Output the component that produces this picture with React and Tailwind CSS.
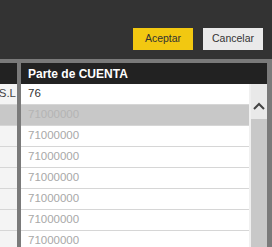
import React from 'react';

const rows = ['76', '71000000', '71000000', '71000000', '71000000', '71000000', '71000000', '71000000'];

export default function App() {
  return (
    <div className="flex h-[247px] w-[272px] flex-col overflow-hidden bg-[#333333] font-['Liberation_Sans',sans-serif]">
      <div className="flex h-[59px] shrink-0 items-end justify-end gap-[10px] pb-[9px] pr-[9px]">
        <button className="flex h-[22px] w-[60px] items-center justify-center bg-[#f2c811] text-[10.5px] text-[#333]">
          Aceptar
        </button>
        <button className="flex h-[22px] w-[60px] items-center justify-center bg-[#eaeaea] text-[10.5px] text-[#333]">
          Cancelar
        </button>
      </div>

      <div className="flex flex-1 gap-[4px] overflow-hidden bg-[#7a7a7a] pr-[5px] pt-[4px]">
        {/* left column, mostly cut off */}
        <div className="flex w-[17px] shrink-0 flex-col overflow-hidden">
          <div className="h-[21px] shrink-0 bg-[#222]" />
          {rows.map((r, i) => (
            <div
              key={i}
              className={`flex h-[21px] shrink-0 items-center justify-end border-b border-[#d6d6d6] pr-[1px] text-[11.5px] text-[#444] ${i === 1 ? 'bg-[#c8c8c8]' : 'bg-[#f4f4f4]'}`}
            >
              {i === 0 ? 'S.L' : ''}
            </div>
          ))}
        </div>

        {/* right column */}
        <div className="flex flex-1 flex-col overflow-hidden">
          <div className="flex h-[21px] shrink-0 items-center bg-[#222] pl-[7px] text-[12px] font-bold text-white">
            Parte de CUENTA
          </div>
          <div className="flex flex-1 overflow-hidden">
            <div className="flex flex-1 flex-col">
              {rows.map((r, i) => (
                <div
                  key={i}
                  className={`flex h-[21px] shrink-0 items-center border-b border-[#d6d6d6] pl-[7px] text-[11.5px] ${
                    i === 0 ? 'bg-white text-[#333]' : i === 1 ? 'bg-[#c8c8c8] text-[#b4b4b4]' : 'bg-white text-[#a8a8a8]'
                  }`}
                >
                  {r}
                </div>
              ))}
            </div>
            <div className="flex w-[18px] shrink-0 flex-col border-l-2 border-[#f0f0f0]">
              <div className="flex h-[35px] shrink-0 items-end justify-center bg-[#e9e9e9] pb-[9px]">
                <svg width="12" height="8" viewBox="0 0 12 8">
                  <path d="M1 7 L6 2 L11 7" fill="none" stroke="#444" strokeWidth="2" />
                </svg>
              </div>
              <div className="flex-1 bg-[#c8c8c8]" />
            </div>
          </div>
        </div>
      </div>
    </div>
  );
}
